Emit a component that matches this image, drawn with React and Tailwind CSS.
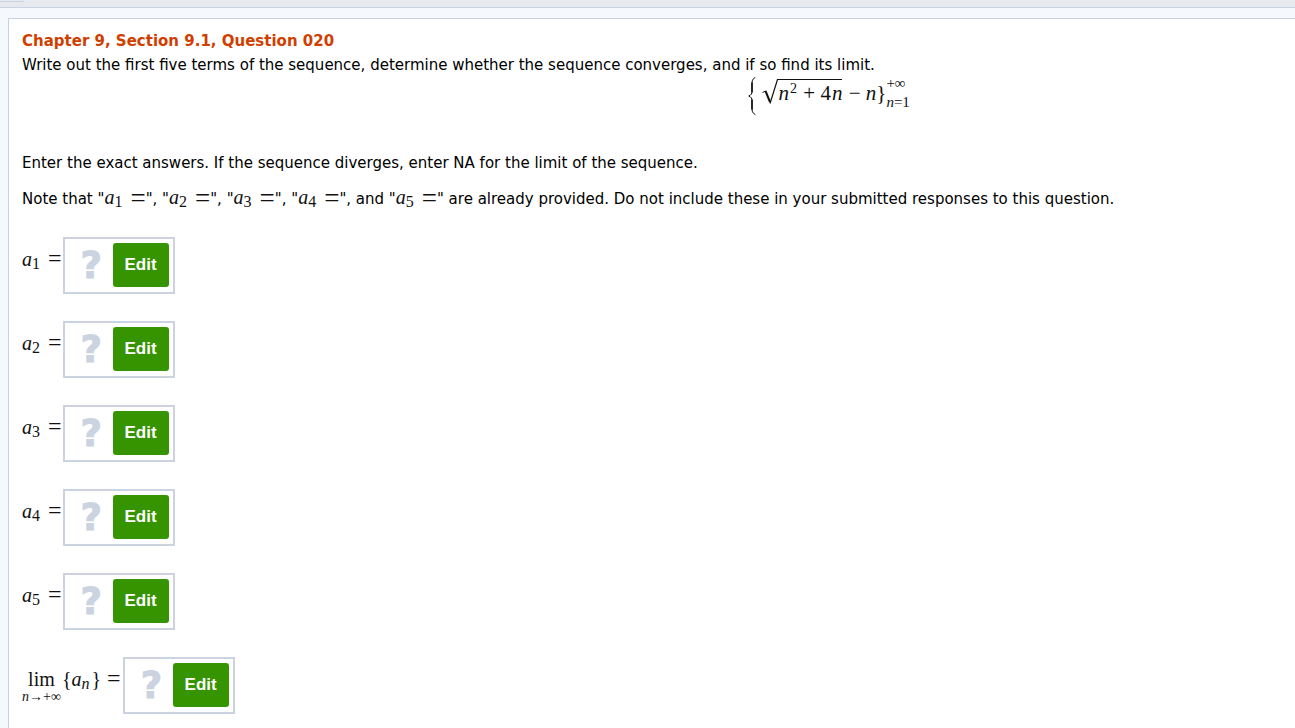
const MATH = "font-['Liberation_Serif',serif] text-[#111]";

function Sub({ children, italic }) {
  return (
    <sub className={`bottom-0 top-[3px] align-baseline text-base leading-0 ${italic ? "italic" : ""}`}>
      {children}
    </sub>
  );
}

function Term({ index, wide }) {
  return (
    <span className={`${MATH} whitespace-pre text-xl leading-none`}>
      <i>a</i>
      <Sub>{index}</Sub>
      <span className={`pl-2 leading-0 ${wide ? "align-[-3px] text-[27px]" : "text-2xl"}`}>=</span>
    </span>
  );
}

function AnswerBox({ name }) {
  return (
    <div className="flex h-[57px] w-28 items-start justify-between border-2 border-[#cad3df] bg-white p-1 pl-4">
      <span className="self-center font-['DejaVu_Sans',sans-serif] text-[37px] leading-none font-bold text-[#cad3df] [-webkit-text-stroke:1px_#cad3df]">
        ?
      </span>
      <button
        type="button"
        aria-label={`Edit ${name}`}
        className="h-11 w-14 rounded-[3px] bg-[#359400] font-['Liberation_Sans',sans-serif] text-[17px] font-bold text-white"
      >
        Edit
      </button>
    </div>
  );
}

function SequenceFormula() {
  return (
    <div className={`${MATH} flex h-10 items-start text-[21px] leading-none`}>
      <svg className="h-10 w-2" viewBox="0 0 8 40" fill="none" stroke="#111" strokeLinecap="round" aria-label="{">
        <path d="M7 .5C4.300 2 4 4 4 7v7c0 2.800-.8 4-3.300 5 2.500 1 3.300 2.200 3.300 5v7c0 3 .3 5 3 6.500" strokeWidth="1" />
        <path d="M4 6v9M4 23v9" strokeWidth="1.600" />
      </svg>
      <div className="flex h-8 items-center pl-1.5">
        <svg className="h-7 w-[17px]" viewBox="0 0 17 28" fill="none" stroke="#111" aria-label="square root">
          <path d="M.5 13.500l3-1.500" strokeWidth="1" />
          <path d="M3.500 12l4.500 11" strokeWidth="2" />
          <path d="M8 24.500L15.500 .5h2" strokeWidth="1.200" />
        </svg>
        <span className="flex h-7 items-center gap-px border-t border-[#111] whitespace-pre">
          <i>n</i>
          <sup className="top-0 self-start pt-0.5 text-sm leading-none">2</sup>
          <span> + 4</span>
          <i>n</i>
        </span>
        <span className="pl-px whitespace-pre">
          {" − "}
          <i>n</i>
          {"}"}
        </span>
        <span className="flex flex-col gap-1 text-[15px] leading-none">
          <span>+∞</span>
          <span>
            <i>n</i>=1
          </span>
        </span>
      </div>
    </div>
  );
}

export default function App() {
  return (
    <div className="flex h-screen flex-col overflow-hidden bg-[#f5f8fc] font-['DejaVu_Sans',Verdana,sans-serif] text-[15px] leading-6 text-black">
      <div className="h-2 shrink-0 border-b border-[#c9d2df] bg-[#e6eaee]">
        <div className="h-0.5 w-6 rounded-br border-b border-[#c9d2df]" />
      </div>
      <main className="mt-2.5 ml-2 grow border-t border-l border-[#c9d2df] bg-white pt-2.5 pl-[13px]">
        <h1 className="font-bold text-[#d03f00]">Chapter 9, Section 9.1, Question 020</h1>
        <p>Write out the first five terms of the sequence, determine whether the sequence converges, and if so find its limit.</p>
        <div className="pl-[57%]">
          <SequenceFormula />
        </div>
        <p className="mt-[34px]">Enter the exact answers. If the sequence diverges, enter NA for the limit of the sequence.</p>
        <p className="mt-3 whitespace-nowrap">
          Note that "<Term index="1" wide />", "<Term index="2" wide />", "<Term index="3" wide />", "
          <Term index="4" wide />", and "<Term index="5" wide />" are already provided. Do not include these in your
          submitted responses to this question.
        </p>
        <div className="mt-[26px] flex flex-col gap-[27px]">
          {["1", "2", "3", "4", "5"].map((n) => (
            <div key={n} className="flex items-start gap-px">
              <div className="flex h-11 items-center">
                <Term index={n} />
              </div>
              <AnswerBox name={`a${n}`} />
            </div>
          ))}
          <div className="flex items-start gap-0.5">
            <div className={`${MATH} flex gap-px pt-3 text-xl leading-5`}>
              <div className="flex flex-col items-center">
                <span>lim</span>
                <span className="text-sm leading-4">
                  <i>n</i>→+∞
                </span>
              </div>
              <span className="whitespace-pre">
                {"{"}
                <i>a</i>
                <Sub italic>n</Sub>
                <span className="pl-0.5">{"}"}</span>
                <span className="pl-1.5 text-2xl leading-0">=</span>
              </span>
            </div>
            <AnswerBox name="limit" />
          </div>
        </div>
      </main>
    </div>
  );
}
